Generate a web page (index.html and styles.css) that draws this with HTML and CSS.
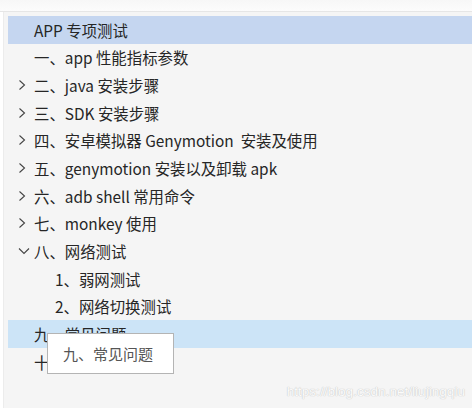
FILE: index.html
```html
<!DOCTYPE html>
<html lang="zh">
<head>
<meta charset="utf-8">
<link rel="stylesheet" href="styles.css">
</head>
<body>
<div class="topbar"></div>
<div class="panel">
  <ul class="tree">
    <li class="row selected"><span class="arrow"></span><span class="label">APP 专项测试</span></li>
    <li class="row"><span class="arrow"></span><span class="label">一、app 性能指标参数</span></li>
    <li class="row"><span class="arrow"><svg viewBox="0 0 8 12" width="8" height="12"><path d="M1.5 1.5 L6.5 6 L1.5 10.5" fill="none" stroke="#444" stroke-width="1.1"/></svg></span><span class="label">二、java 安装步骤</span></li>
    <li class="row"><span class="arrow"><svg viewBox="0 0 8 12" width="8" height="12"><path d="M1.5 1.5 L6.5 6 L1.5 10.5" fill="none" stroke="#444" stroke-width="1.1"/></svg></span><span class="label">三、SDK 安装步骤</span></li>
    <li class="row"><span class="arrow"><svg viewBox="0 0 8 12" width="8" height="12"><path d="M1.5 1.5 L6.5 6 L1.5 10.5" fill="none" stroke="#444" stroke-width="1.1"/></svg></span><span class="label">四、安卓模拟器 Genymotion &nbsp;安装及使用</span></li>
    <li class="row"><span class="arrow"><svg viewBox="0 0 8 12" width="8" height="12"><path d="M1.5 1.5 L6.5 6 L1.5 10.5" fill="none" stroke="#444" stroke-width="1.1"/></svg></span><span class="label">五、genymotion 安装以及卸载 apk</span></li>
    <li class="row"><span class="arrow"><svg viewBox="0 0 8 12" width="8" height="12"><path d="M1.5 1.5 L6.5 6 L1.5 10.5" fill="none" stroke="#444" stroke-width="1.1"/></svg></span><span class="label">六、adb shell 常用命令</span></li>
    <li class="row"><span class="arrow"><svg viewBox="0 0 8 12" width="8" height="12"><path d="M1.5 1.5 L6.5 6 L1.5 10.5" fill="none" stroke="#444" stroke-width="1.1"/></svg></span><span class="label">七、monkey 使用</span></li>
    <li class="row"><span class="arrow"><svg viewBox="0 0 12 8" width="12" height="8"><path d="M1 1.5 L6 6.5 L11 1.5" fill="none" stroke="#444" stroke-width="1.1"/></svg></span><span class="label">八、网络测试</span></li>
    <li class="row child"><span class="arrow"></span><span class="label">1、弱网测试</span></li>
    <li class="row child"><span class="arrow"></span><span class="label">2、网络切换测试</span></li>
    <li class="row hover"><span class="arrow"></span><span class="label">九、常见问题</span></li>
    <li class="row"><span class="arrow"></span><span class="label">十、</span></li>
  </ul>
  <div class="tooltip">九、常见问题</div>
  <div class="watermark">https://blog.csdn.net/liujingqiu</div>
</div>
</body>
</html>
```

FILE: styles.css
```css
html, body {
  margin: 0;
  padding: 0;
  background: #ffffff;
  width: 474px;
  height: 408px;
  overflow: hidden;
  font-family: "Noto Sans CJK SC", "Noto Sans", sans-serif;
}

.topbar {
  height: 11px;
  background: linear-gradient(#f7f7f7, #fcfcfc);
  border-bottom: 1px solid #e6e6e6;
  margin-right: 2px;
}

.panel {
  position: relative;
  margin-left: 3px;
  margin-right: 2px;
  height: 392px;
  background: #f5f5f5;
  border-left: 1px solid #ececec;
  padding-top: 4px;
}

.tree {
  list-style: none;
  margin: 0;
  padding: 0 0 0 4px;
}

.row {
  height: 27.67px;
  display: flex;
  align-items: center;
  font-size: 15.4px;
  color: #262626;
  white-space: nowrap;
}

.row.selected {
  background: #c5d6f0;
}

.row.hover {
  background: #cce4f7;
}

.arrow {
  width: 26px;
  display: flex;
  justify-content: flex-start;
  padding-left: 10px;
  box-sizing: border-box;
  align-items: center;
}

.child .label {
  padding-left: 21px;
}

.tooltip {
  position: absolute;
  left: 43px;
  top: 321px;
  width: 127px;
  height: 41px;
  background: #ffffff;
  border: 1px solid #b4b4b4;
  box-sizing: border-box;
  font-size: 15px;
  color: #555555;
  padding-left: 15px;
  display: flex;
  align-items: center;
}

.watermark {
  position: absolute;
  right: 7px;
  top: 372px;
  font-family: "Liberation Sans", sans-serif;
  font-size: 13.6px;
  color: #fbfbfb;
  text-shadow: 0 0 1px #c4c4c4, 0 0 1px #cccccc;
}
```
